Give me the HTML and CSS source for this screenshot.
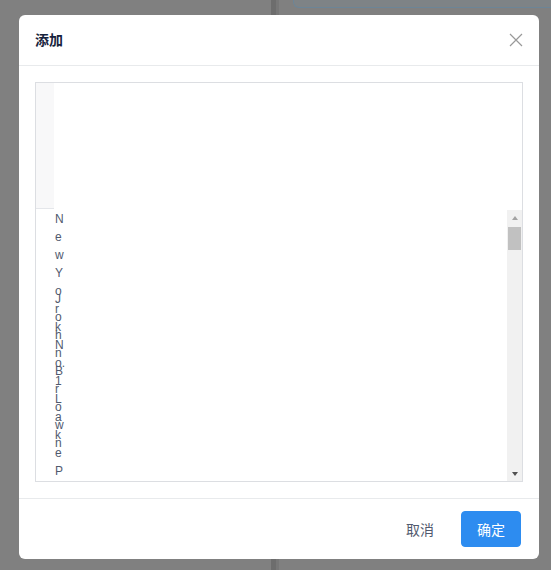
FILE: index.html
```html
<!DOCTYPE html>
<html lang="zh-CN">
<head>
<meta charset="utf-8">
<title>添加</title>
<link rel="stylesheet" href="styles.css">
</head>
<body>
<div class="page">
  <div class="page-left"></div>
  <div class="splitter"><span class="split-dark"></span><span class="split-light"></span></div>
  <div class="page-right"><div class="panel"></div></div>
</div>
<div class="modal">
  <div class="modal-header">
    <div class="modal-title">添加</div>
    <a class="modal-close" aria-label="close">
      <svg width="14" height="14" viewBox="0 0 14 14"><path d="M1 1 L13 13 M13 1 L1 13" stroke="#999" stroke-width="1.2" fill="none"/></svg>
    </a>
  </div>
  <div class="modal-body">
    <div class="grid-box">
      <div class="grid-head"><div class="gutter"></div></div>
      <div class="grid-rows">
        <div class="cells">
          <div class="cell">New York No. 1 Lake Park</div>
          <div class="cell cell-offset">John Brown</div>
        </div>
        <div class="vscroll">
          <span class="arrow-up"></span>
          <span class="thumb"></span>
          <span class="spacer"></span>
          <span class="arrow-down"></span>
        </div>
      </div>
    </div>
  </div>
  <div class="modal-footer">
    <button class="btn btn-text">取消</button>
    <button class="btn btn-primary">确定</button>
  </div>
</div>
</body>
</html>
```

FILE: styles.css
```css
html, body {
  margin: 0;
  padding: 0;
}
body {
  width: 551px;
  height: 570px;
  overflow: hidden;
  background: #808080;
  font-family: "Liberation Sans", Arial, "Noto Sans CJK SC", sans-serif;
  position: relative;
}
.page {
  display: flex;
  height: 570px;
}
.page-left {
  width: 271px;
  flex: none;
}
.splitter {
  display: flex;
  flex: none;
  height: 100%;
}
.split-dark {
  width: 5px;
  background: #6d6d6d;
}
.split-light {
  width: 3px;
  background: #777777;
}
.page-right {
  flex: 1;
  padding-left: 14px;
}
.panel {
  height: 7px;
  margin-right: -20px;
  border: 1px solid #6c8597;
  border-top: none;
  border-radius: 0 0 0 6px;
  background: #7e8386;
}
.modal {
  position: absolute;
  left: 19px;
  top: 15px;
  width: 520px;
  height: 544px;
  background: #fff;
  border-radius: 6px;
  display: flex;
  flex-direction: column;
}
.modal-header {
  position: relative;
  height: 50px;
  box-sizing: border-box;
  padding: 14px 16px;
  border-bottom: 1px solid #e8eaec;
  flex: none;
  height: 51px;
}
.modal-title {
  font-size: 14px;
  line-height: 22px;
  font-weight: bold;
  color: #17233d;
}
.modal-close {
  position: absolute;
  right: 16px;
  top: 18px;
  width: 14px;
  height: 14px;
  display: block;
}
.modal-close svg {
  display: block;
}
.modal-body {
  padding: 16px;
  flex: none;
}
.grid-box {
  height: 400px;
  box-sizing: border-box;
  border: 1px solid #dcdee2;
  display: flex;
  flex-direction: column;
}
.grid-head {
  height: 126px;
  flex: none;
}
.gutter {
  width: 18px;
  height: 125px;
  background: #f8f8f9;
  border-bottom: 1px solid #e4e6ea;
}
.grid-rows {
  flex: 1;
  display: flex;
  padding-top: 1px;
  min-height: 0;
  overflow: hidden;
}
.cells {
  flex: 1;
  display: grid;
  align-items: start;
  justify-items: start;
  padding-left: 19px;
  overflow: hidden;
}
.cell {
  grid-area: 1 / 1;
  width: 1px;
  word-break: break-all;
  font-size: 12px;
  line-height: 18px;
  color: #515a6e;
}
.cell-offset {
  margin-top: 80px;
}
.vscroll {
  width: 15px;
  flex: none;
  background: #f1f1f1;
  display: flex;
  flex-direction: column;
  align-items: center;
  padding-top: 6px;
  box-sizing: border-box;
}
.arrow-up {
  width: 0;
  height: 0;
  border-left: 3.5px solid transparent;
  border-right: 3.5px solid transparent;
  border-bottom: 4px solid #a3a3a3;
}
.thumb {
  width: 13px;
  height: 23px;
  margin-top: 7px;
  background: #c1c1c1;
}
.spacer {
  flex: 1;
}
.arrow-down {
  width: 0;
  height: 0;
  border-left: 3.5px solid transparent;
  border-right: 3.5px solid transparent;
  border-top: 4px solid #505050;
  margin-bottom: 5px;
}
.modal-footer {
  border-top: 1px solid #e8eaec;
  padding: 12px 18px;
  display: flex;
  justify-content: flex-end;
  gap: 11px;
  flex: none;
}
.btn {
  width: 60px;
  height: 36px;
  font-family: "Liberation Sans", Arial, "Noto Sans CJK SC", sans-serif;
  font-size: 14px;
  border-radius: 4px;
  border: 1px solid transparent;
  padding: 0;
  cursor: pointer;
}
.btn-text {
  background: transparent;
  color: #515a6e;
}
.btn-primary {
  background: #2d8cf0;
  border-color: #2d8cf0;
  color: #fff;
}
```
